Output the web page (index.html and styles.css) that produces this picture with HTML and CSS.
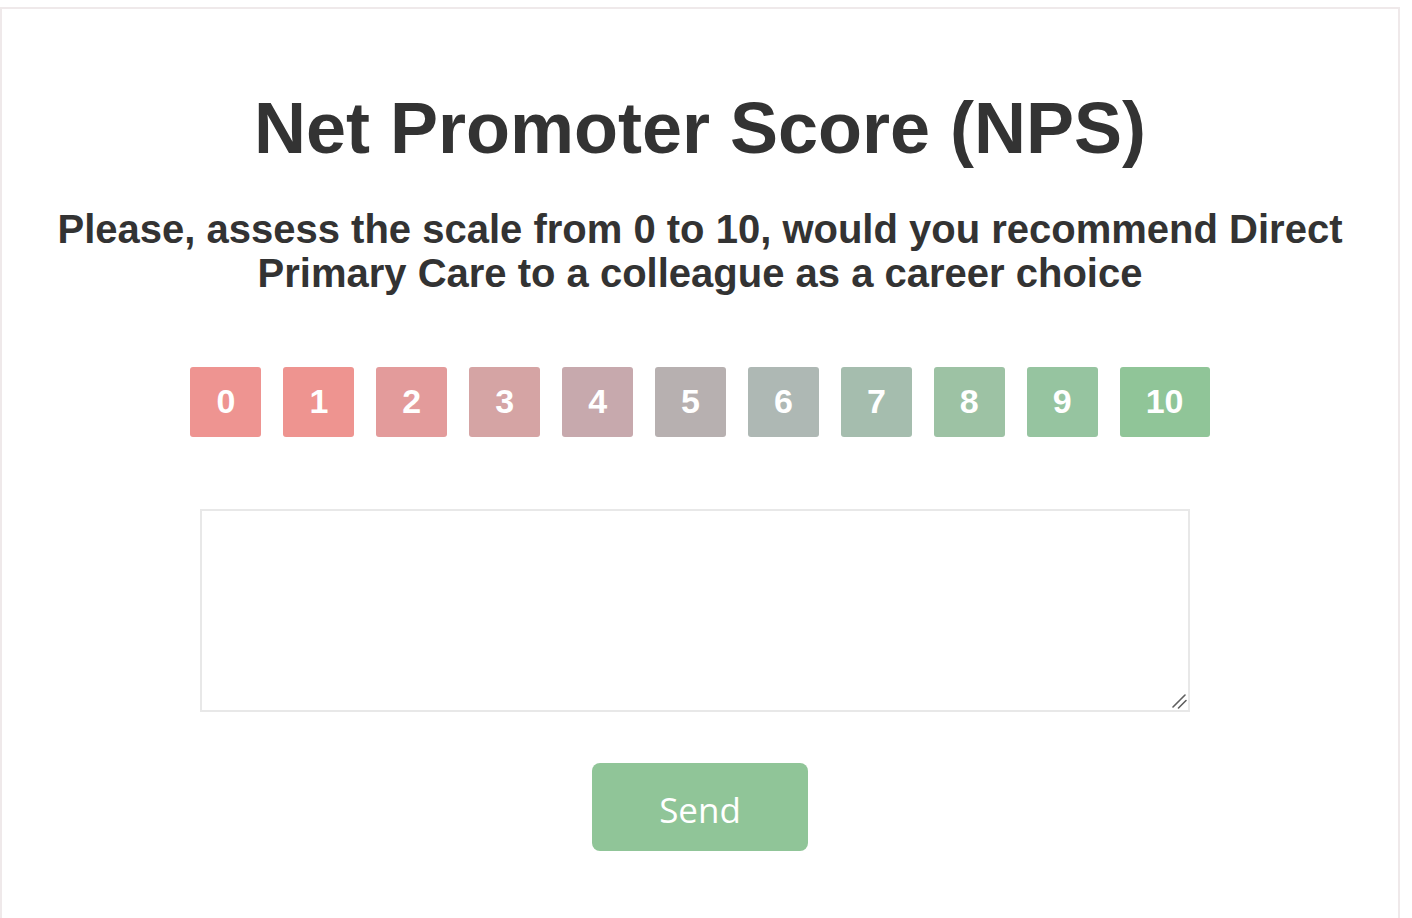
FILE: index.html
```html
<!DOCTYPE html>
<html lang="en">
<head>
  <meta charset="UTF-8">
  <meta name="viewport" content="width=device-width, initial-scale=1.0">
  <title>Net Promoter Score</title>
  <link rel="stylesheet" href="styles.css">
</head>
<body>
  <div class="container">
    <h1>Net Promoter Score (NPS)</h1>
    <p class="question">Please, assess the scale from 0 to 10, would you recommend Direct Primary Care to a colleague as a career choice</p>
    <div class="scale">
      <button class="score s0">0</button>
      <button class="score s1">1</button>
      <button class="score s2">2</button>
      <button class="score s3">3</button>
      <button class="score s4">4</button>
      <button class="score s5">5</button>
      <button class="score s6">6</button>
      <button class="score s7">7</button>
      <button class="score s8">8</button>
      <button class="score s9">9</button>
      <button class="score s10">10</button>
    </div>
    <div class="comment-row">
      <div class="comment-box">
        <textarea class="comment"></textarea>
        <!-- grip in the corner -->
        <svg class="grip" width="16" height="16" viewBox="0 0 16 16">
          <path d="M1 13 L13 1 M6.5 14 L14 6.5" stroke="#5f5f5f" stroke-width="1.6" stroke-linecap="round" fill="none"/>
        </svg>
      </div>
    </div>
    <div class="actions">
      <button class="send">Send</button>
    </div>
  </div>
</body>
</html>
```

FILE: styles.css
```css
html, body{
  margin: 0;
  overflow: hidden;
  background: #fff;
}
.container{
  box-sizing: border-box;
  width: 1400px;
  height: 1000px;
  margin-top: 7px;
  padding-top: 79px;
  border: 2px solid #efe9ea;
  font-family: "Liberation Sans", Arial, sans-serif;
  color: #333;
  text-align: center;
}
h1{
  margin: 0;
  font-size: 72px;
  line-height: 80px;
  font-weight: bold;
}
.question{
  margin: 39px 0 0;
  font-size: 40px;
  line-height: 44px;
  font-weight: bold;
}
.scale{
  margin-top: 72px;
  display: flex;
  justify-content: center;
  gap: 22px;
}
.score{
  height: 70px;
  padding: 0 26px 2px;
  border: none;
  border-radius: 3px;
  font-family: "Liberation Sans", Arial, sans-serif;
  font-size: 34px;
  font-weight: bold;
  color: #fff;
  cursor: pointer;
}
.s0{ background-color: #ee9491; }
.s1{ background-color: #ee9490; }
.s2{ background-color: #e39b9b; }
.s3{ background-color: #d5a4a4; }
.s4{ background-color: #c7a9ad; }
.s5{ background-color: #b7b0b0; }
.s6{ background-color: #aeb8b4; }
.s7{ background-color: #a5bdae; }
.s8{ background-color: #9dc2a4; }
.s9{ background-color: #96c4a0; }
.s10{ background-color: #90c598; }

.comment-row{
  margin-top: 72px;
  display: flex;
  justify-content: center;
  padding-right: 10px;
}
.comment-box{
  position: relative;
  width: 990px;
  height: 203px;
}
.comment{
  box-sizing: border-box;
  display: block;
  width: 990px;
  height: 203px;
  margin: 0;
  border: 2px solid #e8e8e8;
  resize: none;
  font-family: "Liberation Sans", Arial, sans-serif;
  font-size: 18px;
}
.grip{
  position: absolute;
  right: 2px;
  bottom: 2px;
  pointer-events: none;
}
.actions{
  margin-top: 51px;
  display: flex;
  justify-content: center;
}
.send{
  width: 216px;
  height: 88px;
  padding: 5px 0 0;
  border: none;
  border-radius: 8px;
  background-color: #90c598;
  color: #fff;
  font-family: "Open Sans", sans-serif;
  font-size: 35px;
  font-weight: 400;
  cursor: pointer;
}
```
